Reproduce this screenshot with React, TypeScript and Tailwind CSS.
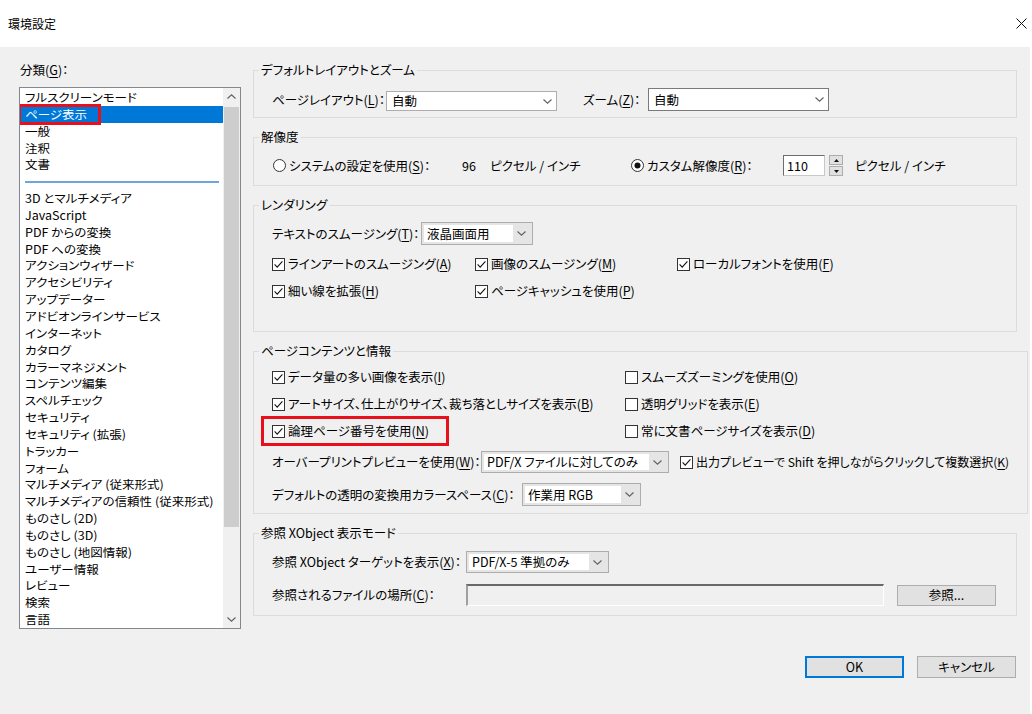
import React from 'react';

// mnemonic key shown as (X) with underlined letter
function Key({ k }: { k: string }) {
  return (
    <span>
      (<span className="underline underline-offset-[2px]">{k}</span>)
    </span>
  );
}

function Chevron({ up }: { up?: boolean }) {
  return (
    <svg width="9" height="5" viewBox="0 0 9 5" className="shrink-0">
      <path d={up ? 'M0.5 4.5 L4.5 0.8 L8.5 4.5' : 'M0.5 0.5 L4.5 4.2 L8.5 0.5'} fill="none" stroke="#606060" strokeWidth="1.1" />
    </svg>
  );
}

function Check({ checked, children, className }: { checked?: boolean; children: React.ReactNode; className?: string }) {
  return (
    <div className={'flex items-center h-[16px] whitespace-nowrap ' + (className ?? '')}>
      <svg width="13" height="13" viewBox="0 0 13 13" className="shrink-0">
        <rect x="0.5" y="0.5" width="12" height="12" fill="#fff" stroke="#333" />
        {checked && <path d="M2.6 6.4 L5.2 9.1 L10.4 3.3" fill="none" stroke="#111" strokeWidth="1.1" />}
      </svg>
      <span className="ml-[3px]">{children}</span>
    </div>
  );
}

function Radio({ on }: { on?: boolean }) {
  return (
    <svg width="13" height="13" viewBox="0 0 13 13" className="shrink-0">
      <circle cx="6.5" cy="6.5" r="6" fill="#fff" stroke="#333" />
      {on && <circle cx="6.5" cy="6.5" r="3" fill="#111" />}
    </svg>
  );
}

function Select({ value, size, variant }: { value: string; size: string; variant: 'plain' | 'focus' | 'gray' }) {
  if (variant === 'gray') {
    return (
      <div className={'flex shrink-0 border border-[#adadad] bg-[#e5e5e5] p-[2px] ' + size}>
        <div className="flex-1 bg-white pl-[3px] flex items-center whitespace-nowrap">{value}</div>
        <div className="w-[17px] flex items-center justify-center">
          <Chevron />
        </div>
      </div>
    );
  }
  return (
    <div className={'flex shrink-0 bg-white border ' + (variant === 'focus' ? 'border-[#7a7a7a] ' : 'border-[#adadad] ') + size}>
      <div className="flex-1 pl-[5px] flex items-center whitespace-nowrap">{value}</div>
      <div className="w-[18px] flex items-center justify-center">
        <Chevron />
      </div>
    </div>
  );
}

function Group({ title, className, children }: { title: string; className?: string; children: React.ReactNode }) {
  return (
    <fieldset className={'border border-[#dcdcdc] ' + (className ?? '')}>
      <legend className="ml-[5px] px-[2px] leading-[16px] whitespace-nowrap">{title}</legend>
      {children}
    </fieldset>
  );
}

const topItems = ['フルスクリーンモード', 'ページ表示', '一般', '注釈', '文書'];
const restItems = [
  '3D とマルチメディア',
  'JavaScript',
  'PDF からの変換',
  'PDF への変換',
  'アクションウィザード',
  'アクセシビリティ',
  'アップデーター',
  'アドビオンラインサービス',
  'インターネット',
  'カタログ',
  'カラーマネジメント',
  'コンテンツ編集',
  'スペルチェック',
  'セキュリティ',
  'セキュリティ (拡張)',
  'トラッカー',
  'フォーム',
  'マルチメディア (従来形式)',
  'マルチメディアの信頼性 (従来形式)',
  'ものさし (2D)',
  'ものさし (3D)',
  'ものさし (地図情報)',
  'ユーザー情報',
  'レビュー',
  '検索',
  '言語',
];

function ItemText({ text }: { text: string }) {
  return <span className="inline-block origin-left text-[11.6px] leading-[16.85px] scale-x-[1.08]">{text}</span>;
}

function CategoryList() {
  return (
    <div className="mt-[9px] h-[542px] border border-[#828790] bg-white flex overflow-hidden">
      <div className="flex-1 pt-[1px] leading-[16.85px]">
        {topItems.map(t =>
          t === 'ページ表示' ? (
            <div key={t} className="relative h-[16.85px] pl-[5px] bg-[#0078d7] text-white whitespace-nowrap">
              <ItemText text={t} />
              <div className="absolute -left-[2px] -top-[2px] w-[83px] h-[21px] border-[3px] border-[#e8101a]" />
            </div>
          ) : (
            <div key={t} className="h-[16.85px] pl-[5px] whitespace-nowrap">
              <ItemText text={t} />
            </div>
          )
        )}
        <div className="h-[16.85px] flex items-center pl-[5px] pr-[4px]">
          <div className="w-full h-[2px] bg-[#6fa6da]" />
        </div>
        {restItems.map(t => (
          <div key={t} className="h-[16.85px] pl-[5px] whitespace-nowrap">
            <ItemText text={t} />
          </div>
        ))}
      </div>
      <div className="w-[17px] bg-[#f0f0f0] flex flex-col">
        <div className="h-[17px] flex items-center justify-center">
          <Chevron up />
        </div>
        <div className="mt-[2px] mx-[1px] h-[420px] bg-[#cdcdcd]" />
        <div className="flex-1" />
        <div className="h-[17px] flex items-center justify-center">
          <Chevron />
        </div>
      </div>
    </div>
  );
}

export default function App() {
  return (
    <div className="w-[1032px] h-[714px] flex flex-col bg-white text-[12.5px] leading-[16px] text-black [font-family:'Noto_Sans_CJK_JP',sans-serif] [font-feature-settings:'palt'] overflow-hidden">
      <div className="h-[47px] shrink-0 flex items-center justify-between pl-[8px] pr-[5px]">
        <span className="text-[12px]">環境設定</span>
        <svg width="11" height="11" viewBox="0 0 11 11">
          <path d="M0.5 0.5 L10.5 10.5 M10.5 0.5 L0.5 10.5" stroke="#111" strokeWidth="1" />
        </svg>
      </div>

      <div className="flex-1 bg-[#f0f0f0] border-r-2 border-white flex flex-col">
        <div className="flex pt-[15px] pl-[19px]">
          <div className="w-[222px] flex flex-col shrink-0">
            <div className="h-[16px] pl-[1px] whitespace-nowrap">
              分類<Key k="G" />：
            </div>
            <CategoryList />
          </div>

          <div className="ml-[12px] w-[764px] flex flex-col">
            <Group title="デフォルトレイアウトとズーム">
              <div className="px-[18px] pt-[10px] pb-[6px] flex items-start h-[39px] whitespace-nowrap">
                <div className="w-[114px] mt-[4px]">
                  ページレイアウト<Key k="L" />：
                </div>
                <div className="mt-[3px]">
                  <Select value="自動" size="w-[171px] h-[20px]" variant="plain" />
                </div>
                <div className="ml-[26px] w-[65px] mt-[4px]">
                  ズーム<Key k="Z" />：
                </div>
                <Select value="自動" size="w-[181px] h-[23px]" variant="focus" />
              </div>
            </Group>

            <Group title="解像度" className="mt-[11px]">
              <div className="px-[18px] pt-[10px] pb-[9px]">
                <div className="flex items-center h-[21px] whitespace-nowrap">
                  <div className="ml-[1px] w-[189px] flex items-center">
                    <Radio />
                    <span className="ml-[3px]">
                      システムの設定を使用<Key k="S" />：
                    </span>
                  </div>
                  <div className="w-[28px]">96</div>
                  <div className="w-[141px]">ピクセル / インチ</div>
                  <div className="w-[152px] flex items-center">
                    <Radio on />
                    <span className="ml-[3px]">
                      カスタム解像度<Key k="R" />：
                    </span>
                  </div>
                  <div className="w-[42px] h-[21px] bg-white border border-[#c8c8c8] border-t-[#6d6d6d] border-l-[#6d6d6d] pl-[3px] flex items-center">
                    110
                  </div>
                  <div className="ml-[4px] w-[14px] h-[21px] flex flex-col gap-[1px]">
                    <div className="flex-1 bg-[#e1e1e1] border border-[#adadad] flex items-center justify-center">
                      <svg width="5" height="3" viewBox="0 0 5 3">
                        <path d="M0 3 L2.5 0 L5 3Z" fill="#111" />
                      </svg>
                    </div>
                    <div className="flex-1 bg-[#e1e1e1] border border-[#adadad] flex items-center justify-center">
                      <svg width="5" height="3" viewBox="0 0 5 3">
                        <path d="M0 0 L2.5 3 L5 0Z" fill="#111" />
                      </svg>
                    </div>
                  </div>
                  <div className="ml-[12px]">ピクセル / インチ</div>
                </div>
              </div>
            </Group>

            <Group title="レンダリング" className="mt-[11px]">
              <div className="px-[18px] pt-[9px] pb-[32px] flex flex-col">
                <div className="flex items-center h-[23px] whitespace-nowrap">
                  <div className="w-[149px]">
                    テキストのスムージング<Key k="T" />：
                  </div>
                  <Select value="液晶画面用" size="w-[112px] h-[23px]" variant="gray" />
                </div>
                <div className="mt-[11px] flex">
                  <Check checked className="w-[203px]">
                    ラインアートのスムージング<Key k="A" />
                  </Check>
                  <Check checked className="w-[202px]">
                    画像のスムージング<Key k="M" />
                  </Check>
                  <Check checked>
                    ローカルフォントを使用<Key k="F" />
                  </Check>
                </div>
                <div className="mt-[11px] flex">
                  <Check checked className="w-[203px]">
                    細い線を拡張<Key k="H" />
                  </Check>
                  <Check checked>
                    ページキャッシュを使用<Key k="P" />
                  </Check>
                </div>
              </div>
            </Group>

            <Group title="ページコンテンツと情報" className="mt-[11px]">
              <div className="px-[18px] pt-[10px] pb-[7px] flex flex-col">
                <div className="flex">
                  <Check checked className="w-[353px]">
                    データ量の多い画像を表示<Key k="I" />
                  </Check>
                  <Check>
                    スムーズズーミングを使用<Key k="O" />
                  </Check>
                </div>
                <div className="mt-[11px] flex">
                  <Check checked className="w-[353px]">
                    アートサイズ、仕上がりサイズ、裁ち落としサイズを表示<Key k="B" />
                  </Check>
                  <Check>
                    透明グリッドを表示<Key k="E" />
                  </Check>
                </div>
                <div className="mt-[11px] flex">
                  <div className="w-[353px]">
                    <div className="relative w-fit">
                      <Check checked>
                        論理ページ番号を使用<Key k="N" />
                      </Check>
                      <div className="absolute -left-[11px] -top-[7px] w-[188px] h-[30px] border-[3px] border-[#e8101a]" />
                    </div>
                  </div>
                  <Check>
                    常に文書ページサイズを表示<Key k="D" />
                  </Check>
                </div>
                <div className="mt-[12px] flex items-center h-[22px] whitespace-nowrap">
                  <div className="w-[209px]">
                    オーバープリントプレビューを使用<Key k="W" />：
                  </div>
                  <Select value="PDF/X ファイルに対してのみ" size="w-[188px] h-[22px]" variant="gray" />
                  <Check checked className="ml-[11px] text-[12px]">
                    出力プレビューで Shift を押しながらクリックして複数選択<Key k="K" />
                  </Check>
                </div>
                <div className="mt-[10px] flex items-center h-[23px] whitespace-nowrap">
                  <div className="w-[250px]">
                    デフォルトの透明の変換用カラースペース<Key k="C" />：
                  </div>
                  <Select value="作業用 RGB" size="w-[119px] h-[23px]" variant="gray" />
                </div>
              </div>
            </Group>

            <Group title="参照 XObject 表示モード" className="mt-[11px]">
              <div className="px-[18px] pt-[10px] pb-[9px] flex flex-col">
                <div className="flex items-center h-[22px] whitespace-nowrap">
                  <div className="w-[194px]">
                    参照 XObject ターゲットを表示<Key k="X" />：
                  </div>
                  <Select value="PDF/X-5 準拠のみ" size="w-[143px] h-[22px]" variant="gray" />
                </div>
                <div className="mt-[11px] flex items-center h-[22px] whitespace-nowrap">
                  <div className="w-[194px]">
                    参照されるファイルの場所<Key k="C" />：
                  </div>
                  <div className="w-[418px] h-[22px] border-t-2 border-l-2 border-b border-r border-t-[#696969] border-l-[#a0a0a0] border-b-white border-r-white bg-[#f0f0f0]" />
                  <button className="ml-[13px] w-[99px] h-[21px] bg-[#e1e1e1] border border-[#adadad] flex items-center justify-center">
                    参照...
                  </button>
                </div>
              </div>
            </Group>
          </div>
        </div>

        <div className="mt-[27px] flex justify-end pr-[14px]">
          <button className="w-[99px] h-[22px] bg-[#e1e1e1] border-2 border-[#0078d7] flex items-center justify-center">
            OK
          </button>
          <button className="ml-[13px] w-[99px] h-[22px] bg-[#e1e1e1] border border-[#adadad] flex items-center justify-center">
            キャンセル
          </button>
        </div>
      </div>
    </div>
  );
}
